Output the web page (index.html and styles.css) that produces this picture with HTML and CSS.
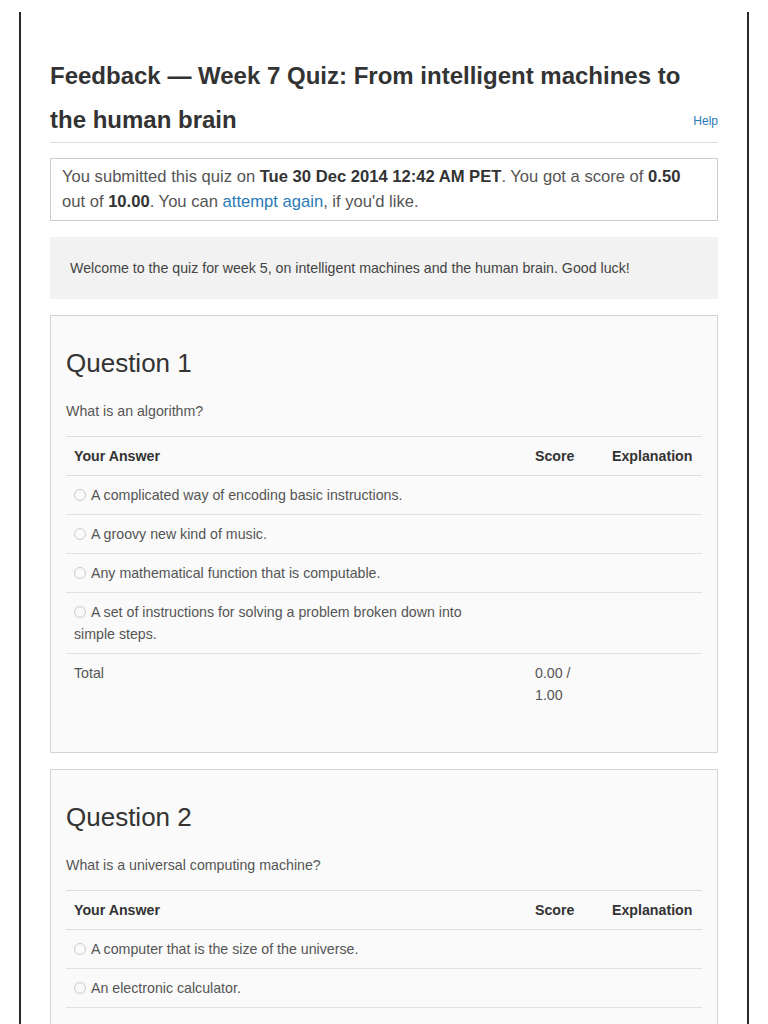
FILE: index.html
```html
<!DOCTYPE html>
<html lang="en">
<head>
<meta charset="utf-8">
<title>Feedback — Week 7 Quiz</title>
<link rel="stylesheet" href="styles.css">
</head>
<body>
<div class="page">
  <div class="title-row">
    <h1 class="title">Feedback — Week 7 Quiz: From intelligent machines to the human brain</h1>
    <a class="help" href="#">Help</a>
  </div>

  <div class="summary">
    You submitted this quiz on <b>Tue 30 Dec 2014 12:42 AM PET</b>. You got a score of <b>0.50</b> out of <b>10.00</b>. You can <a class="link" href="#">attempt again</a>, if you'd like.
  </div>

  <div class="intro">Welcome to the quiz for week 5, on intelligent machines and the human brain. Good luck!</div>

  <div class="card">
    <h2 class="q-title">Question 1</h2>
    <p class="q-text">What is an algorithm?</p>
    <table class="answers">
      <colgroup><col class="c-ans"><col class="c-score"><col class="c-expl"></colgroup>
      <thead>
        <tr><th>Your Answer</th><th>Score</th><th>Explanation</th></tr>
      </thead>
      <tbody>
        <tr><td><span class="radio"></span>A complicated way of encoding basic instructions.</td><td></td><td></td></tr>
        <tr><td><span class="radio"></span>A groovy new kind of music.</td><td></td><td></td></tr>
        <tr><td><span class="radio"></span>Any mathematical function that is computable.</td><td></td><td></td></tr>
        <tr><td><div class="wrap"><span class="radio"></span>A set of instructions for solving a problem broken down into simple steps.</div></td><td></td><td></td></tr>
        <tr class="total"><td>Total</td><td>0.00 / 1.00</td><td></td></tr>
      </tbody>
    </table>
  </div>

  <div class="card">
    <h2 class="q-title">Question 2</h2>
    <p class="q-text">What is a universal computing machine?</p>
    <table class="answers">
      <colgroup><col class="c-ans"><col class="c-score"><col class="c-expl"></colgroup>
      <thead>
        <tr><th>Your Answer</th><th>Score</th><th>Explanation</th></tr>
      </thead>
      <tbody>
        <tr><td><span class="radio"></span>A computer that is the size of the universe.</td><td></td><td></td></tr>
        <tr><td><span class="radio"></span>An electronic calculator.</td><td></td><td></td></tr>
      </tbody>
    </table>
  </div>
</div>
</body>
</html>
```

FILE: styles.css
```css
html, body {
  margin: 0;
  padding: 0;
  background: #fff;
}
body {
  font-family: "Liberation Sans", Arial, Helvetica, sans-serif;
  color: #555;
  overflow: hidden;
  height: 1024px;
}
.page {
  margin: 12px 19px 0;
  border-left: 2px solid #2a2a2a;
  border-right: 2px solid #2a2a2a;
  padding: 42px 29px 0;
  min-height: 1100px;
}
.title-row {
  display: flex;
  align-items: flex-end;
  justify-content: space-between;
  border-bottom: 1px solid #ddd;
}
.title {
  margin: 0;
  font-size: 24px;
  line-height: 44px;
  font-weight: bold;
  color: #333;
  flex: 1;
}
.help {
  font-size: 12px;
  line-height: 42px;
  color: #2a7ab8;
  text-decoration: none;
}
.summary {
  margin-top: 15px;
  border: 1px solid #ccc;
  padding: 5px 11px 6px;
  font-size: 16.6px;
  line-height: 25px;
  color: #555;
}
.summary b {
  color: #333;
}
.link {
  color: #2a7ab8;
  text-decoration: none;
}
.intro {
  margin-top: 16px;
  background: #f2f2f2;
  padding: 20px 20px;
  font-size: 14.2px;
  line-height: 22px;
  color: #444;
}
.card {
  margin-top: 16px;
  border: 1px solid #d4d4d4;
  background: #fafafa;
  padding: 16px 15px 37px;
}
.q-title {
  margin: 17px 0 0;
  font-size: 26px;
  line-height: 29px;
  font-weight: normal;
  color: #333;
}
.q-text {
  margin: 22px 0 0;
  font-size: 14.2px;
  line-height: 22px;
  color: #555;
}
.answers {
  margin-top: 14px;
  width: 100%;
  border-collapse: collapse;
  table-layout: fixed;
  font-size: 14.2px;
  line-height: 22px;
}
.c-score { width: 77px; }
.c-expl { width: 98px; }
.answers th {
  text-align: left;
  font-weight: bold;
  color: #333;
  padding: 8px 8px;
  border-top: 1px solid #ddd;
  border-bottom: 1px solid #ddd;
}
.answers td {
  padding: 8px 8px;
  border-bottom: 1px solid #e2e2e2;
  vertical-align: top;
  color: #555;
}
.answers tr.total td {
  border-bottom: none;
  padding-bottom: 9px;
}
.wrap {
  max-width: 420px;
}
.radio {
  display: inline-block;
  width: 10px;
  height: 10px;
  border: 1px solid #ccc;
  border-radius: 50%;
  background: #fafafa;
  margin-right: 5px;
  vertical-align: -1px;
}
```
